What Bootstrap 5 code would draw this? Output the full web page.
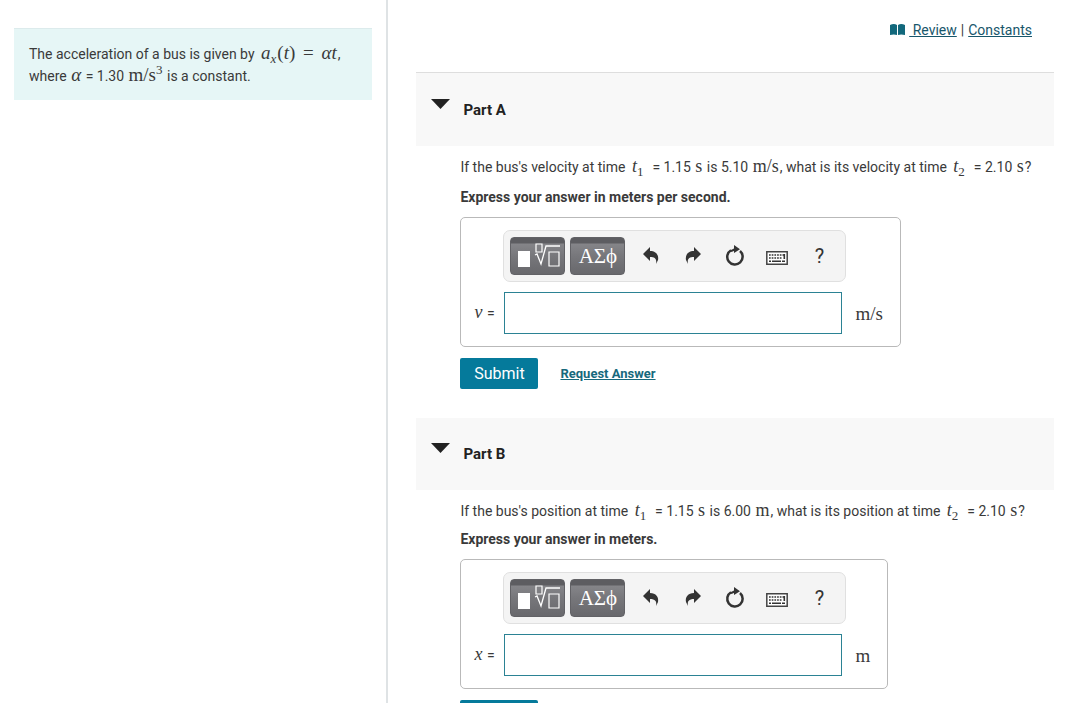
<!DOCTYPE html>
<html lang="en">
<head>
<meta charset="utf-8">
<meta name="viewport" content="width=device-width, initial-scale=1">
<title>Bus acceleration</title>
<link href="https://cdn.jsdelivr.net/npm/bootstrap@5.3.0/dist/css/bootstrap.min.css" rel="stylesheet">
<style>
body { font-family: Roboto, "Liberation Sans", sans-serif; font-size: 14px; line-height: 22px; color: #3a3a3a; background: #fff; }
.intro-pane { flex: 0 0 36%; padding: 28px 14px; border-right: 2px solid #dfe3e5; }
.intro-box { background: #e6f6f6; border-top: 1px solid #dcebec; padding: 14px 12px 13px 15px; line-height: 21px; }
.work-pane { min-width: 0; padding: 19px 25px 30px 28px; }
.mth { font-family: "Liberation Serif", serif; font-size: 18px; line-height: 1; margin: 0 1px; }
.mth sub, .mth sup { font-size: 13px; line-height: 0; }
.mth sub { bottom: -4px; margin-right: 1px; }
.mth sup { top: -7px; }
.intro-box .mth, .unit { font-size: 19px; }
.sym { margin-left: 3px; }
.rel { margin: 0 3px; }
.top-links { padding-right: 22px; margin-bottom: 31px; }
.top-links a { color: #17566b; }
.part-head { background: #f8f8f8; height: 72px; padding: 0 15px; gap: 13px; color: #222; }
.part-head.first { border-top: 1px solid #dedede; height: 74px; }
.part-head h2 { font-size: 15px; line-height: 20px; }
.fold { width: 19px; height: 10px; margin-bottom: 12px; }
.fold svg { display: block; }
.part-body { padding: 10px 0 29px 44px; }
.part-body p { margin-bottom: 8px; }
.part-body.tight p { margin-bottom: 6px; }
.part-body .directive, .part-body.tight .directive { margin-bottom: 9px; }
.answer-box { border: 1px solid #b9b9b9; border-radius: 5px; padding: 12px 16px 12px 12px; display: grid; grid-template-columns: 30px 343px auto; gap: 10px 0; width: fit-content; }
.tools { grid-column: 2; height: 52px; background: #f4f4f4; border: 1px solid #e0e0e0; border-radius: 7px; padding: 0 4px 0 6px; }
.answer-box label { grid-column: 1; }
.pal { flex: none; margin-right: 5px; width: 55px; height: 38px; border: 1px solid #626266; border-radius: 4px; color: #fff; background: linear-gradient(#5d5d61 0, #5d5d61 5px, #858589 6px, #77777b 50%, #68686c 100%); font: 21px/32px "Liberation Serif", serif; }
.tool { flex: none; width: 42px; height: 38px; color: #333; font-size: 20px; }
.entry { width: 338px; height: 42px; margin-left: 1px; border: 1px solid #2b8294; border-radius: 0; padding: 4px 8px; }
.unit { padding-left: 8px; }
.actions { margin-top: 11px; gap: 22px; }
.btn-go { background: #057a9b; color: #fff; border-radius: 2px; width: 78px; height: 31px; font-size: 16px; line-height: 20px; }
.btn-go:hover { background: #04647f; color: #fff; }
.req { color: #17697c; font-size: 13px; }
</style>
</head>
<body>
<svg class="d-none" aria-hidden="true">
  <symbol id="root" viewBox="0 0 53 36"><path d="M7 13h12v16H7z" fill="#fff"/><path d="M25 6h6v8h-6zM38 14h10v14H38z" fill="none" stroke="#fff" stroke-width="1.2"/><path d="M24 17l2-1 4 10 5-18h14" fill="none" stroke="#fff" stroke-width="1.3"/></symbol>
  <symbol id="undo" viewBox="0 0 16 18"><path d="M7 0v4c6 0 9 4 8 9l-2 4c1-5-1-7-6-7v4L0 7z" fill="#333"/></symbol>
  <symbol id="reset" viewBox="0 0 20 22"><path d="M6 5.200A7.700 7.700 0 1 0 15 6" fill="none" stroke="#333" stroke-width="2.500"/><path d="M9 0l6 4.200L9 8z" fill="#333"/><path d="M5 5.500L10 3v2.500L6.500 7z" fill="#333"/></symbol>
  <symbol id="keys" viewBox="0 0 22 14"><path d="M.8.800h20.400v12.400H.8z" fill="#fff" stroke="#444" stroke-width="1.500"/><path d="M3 4h16M3 7h13" stroke="#333" stroke-width="1.700" stroke-dasharray="1.700 1"/><path d="M3 10.200h2m1 0h9m1 0h3M18.300 3v5" stroke="#333" stroke-width="1.600"/></symbol>
  <symbol id="tri" viewBox="0 0 19 10"><path d="M0 0h19L9.500 10z" fill="#222"/></symbol>
</svg>
<div class="d-flex min-vh-100">
  <aside class="intro-pane">
    <div class="intro-box">The acceleration of a bus is given by <span class="mth sym"><i>a<sub>x</sub></i>(<i>t</i>)<span class="rel"> = </span><i>αt</i></span>, where <i class="mth">α</i> = 1.30 <span class="mth">m/s<sup>3</sup></span> is a constant.</div>
  </aside>
  <main class="work-pane flex-grow-1">
    <nav class="top-links d-flex justify-content-end align-items-center" aria-label="Resources">
      <svg class="me-1" width="15" height="12" viewBox="0 0 15 12" aria-hidden="true"><path d="M0 1q4-2 7 0v10q-3-1-7 0zM8 1q3-2 7 0v10q-4-1-7 0z" fill="#12687c"/></svg>
      <a href="#review">&nbsp;Review</a><span class="px-1">|</span><a href="#constants">Constants</a>
    </nav>

    <section>
      <div class="part-head first d-flex align-items-center">
        <button class="fold btn p-0 border-0" type="button" aria-label="Collapse Part A"><svg width="19" height="10"><use href="#tri"/></svg></button>
        <h2 class="fw-bold m-0">Part A</h2>
      </div>
      <div class="part-body">
        <p>If the bus's velocity at time <span class="mth sym"><i>t</i><sub>1</sub></span>&nbsp; = 1.15 <span class="mth">s</span> is 5.10 <span class="mth">m/s</span>, what is its velocity at time <span class="mth sym"><i>t</i><sub>2</sub></span>&nbsp; = 2.10 <span class="mth">s</span>?</p>
        <p class="directive fw-bold">Express your answer in meters per second.</p>
        <div class="answer-box align-items-center">
          <div class="tools d-flex align-items-center" role="toolbar" aria-label="Part A math tools">
            <button class="pal p-0" type="button" aria-label="Templates"><svg class="d-block" width="53" height="36"><use href="#root"/></svg></button>
            <button class="pal p-0" type="button">ΑΣϕ</button>
            <button class="tool btn p-0 border-0" type="button" aria-label="Undo"><svg class="d-block mx-auto" width="16" height="18"><use href="#undo"/></svg></button>
            <button class="tool btn p-0 border-0" type="button" aria-label="Redo"><svg class="d-block mx-auto" width="16" height="18"><use href="#undo" transform="matrix(-1 0 0 1 16 0)"/></svg></button>
            <button class="tool btn p-0 border-0" type="button" aria-label="Reset"><svg class="d-block mx-auto" width="20" height="22"><use href="#reset"/></svg></button>
            <button class="tool btn p-0 border-0" type="button" aria-label="Keyboard"><svg class="d-block mx-auto mt-1" width="22" height="14"><use href="#keys"/></svg></button>
            <button class="tool btn p-0 border-0" type="button">?</button>
          </div>
          <label for="velocity"><i class="mth">v</i> =</label>
          <input class="entry" id="velocity" type="text">
          <span class="unit mth">m/s</span>
        </div>
        <div class="actions d-flex align-items-center">
          <button class="btn btn-go p-0 border-0" type="button">Submit</button>
          <a class="req fw-bold" href="#answer-a">Request Answer</a>
        </div>
      </div>
    </section>

    <section>
      <div class="part-head d-flex align-items-center">
        <button class="fold btn p-0 border-0" type="button" aria-label="Collapse Part B"><svg width="19" height="10"><use href="#tri"/></svg></button>
        <h2 class="fw-bold m-0">Part B</h2>
      </div>
      <div class="part-body tight">
        <p>If the bus's position at time <span class="mth sym"><i>t</i><sub>1</sub></span>&nbsp; = 1.15 <span class="mth">s</span> is 6.00 <span class="mth">m</span>, what is its position at time <span class="mth sym"><i>t</i><sub>2</sub></span>&nbsp; = 2.10 <span class="mth">s</span>?</p>
        <p class="directive fw-bold">Express your answer in meters.</p>
        <div class="answer-box align-items-center">
          <div class="tools d-flex align-items-center" role="toolbar" aria-label="Part B math tools">
            <button class="pal p-0" type="button" aria-label="Templates"><svg class="d-block" width="53" height="36"><use href="#root"/></svg></button>
            <button class="pal p-0" type="button">ΑΣϕ</button>
            <button class="tool btn p-0 border-0" type="button" aria-label="Undo"><svg class="d-block mx-auto" width="16" height="18"><use href="#undo"/></svg></button>
            <button class="tool btn p-0 border-0" type="button" aria-label="Redo"><svg class="d-block mx-auto" width="16" height="18"><use href="#undo" transform="matrix(-1 0 0 1 16 0)"/></svg></button>
            <button class="tool btn p-0 border-0" type="button" aria-label="Reset"><svg class="d-block mx-auto" width="20" height="22"><use href="#reset"/></svg></button>
            <button class="tool btn p-0 border-0" type="button" aria-label="Keyboard"><svg class="d-block mx-auto mt-1" width="22" height="14"><use href="#keys"/></svg></button>
            <button class="tool btn p-0 border-0" type="button">?</button>
          </div>
          <label for="position"><i class="mth">x</i> =</label>
          <input class="entry" id="position" type="text">
          <span class="unit mth">m</span>
        </div>
        <div class="actions d-flex align-items-center">
          <button class="btn btn-go p-0 border-0" type="button">Submit</button>
          <a class="req fw-bold" href="#answer-b">Request Answer</a>
        </div>
      </div>
    </section>
  </main>
</div>
<script src="https://cdn.jsdelivr.net/npm/bootstrap@5.3.0/dist/js/bootstrap.bundle.min.js"></script>
</body>
</html>
